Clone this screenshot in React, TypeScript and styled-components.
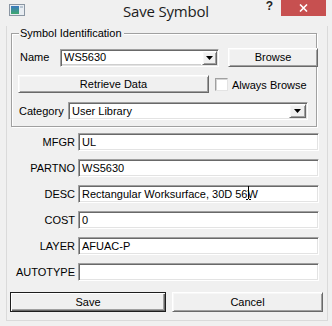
import React from "react";
import styled, { createGlobalStyle, css } from "styled-components";

const GlobalStyle = createGlobalStyle`
  html, body { margin: 0; padding: 0; background: #f0f0f0; }
  body {
    font-family: "Liberation Sans", Arial, sans-serif;
    font-size: 11px;
    color: #000;
  }
  * { box-sizing: border-box; }
`;

const sunken = css`
  border: 1px solid;
  border-color: #a0a0a0 #ffffff #ffffff #a0a0a0;
  box-shadow: inset 1px 1px 0 #696969, inset -1px -1px 0 #e3e3e3;
`;

const raised = css`
  border: 1px solid;
  border-color: #ffffff #696969 #696969 #ffffff;
  box-shadow: inset 1px 1px 0 #f7f7f7, inset -1px -1px 0 #a0a0a0;
  background: #f0f0f0;
`;

const Window = styled.div`
  width: 332px;
  height: 326px;
  background: #f0f0f0;
  display: flex;
  flex-direction: column;
  overflow: hidden;
`;

const TitleBar = styled.div`
  height: 27px;
  display: grid;
  grid-template-columns: 1fr auto 1fr;
  align-items: start;
`;

const AppIcon = styled.svg`
  display: block;
  margin: 4px 0 0 9px;
`;

const Title = styled.div`
  font-family: "Open Sans", "Noto Sans", sans-serif;
  font-size: 15px;
  line-height: 20px;
  padding-top: 1px;
  color: #1c1c1c;
  letter-spacing: -0.2px;
`;

const Controls = styled.div`
  justify-self: end;
  display: flex;
  align-items: flex-start;
  margin-right: 6px;
`;

const HelpGlyph = styled.span`
  font-family: "Liberation Sans", Arial, sans-serif;
  font-weight: bold;
  font-size: 12px;
  line-height: 12px;
  margin-right: 8px;
  color: #222;
`;

const CloseButton = styled.div`
  width: 45px;
  height: 16px;
  background: #c75050;
  display: flex;
  align-items: center;
  justify-content: center;
`;

const Client = styled.div`
  flex: 1;
  margin: 0 4px 5px 6px;
  border: 1px solid #dadada;
  border-top: none;
  padding: 7px 4px 8px 3px;
  display: flex;
  flex-direction: column;
`;

const GroupBox = styled.div`
  position: relative;
  margin: 0 6px 0 1px;
  border: 1px solid #a0a0a0;
  box-shadow: inset 1px 1px 0 #ffffff, 1px 1px 0 #ffffff;
  padding: 14px 7px 6px 6px;
  display: flex;
  flex-direction: column;
`;

const Legend = styled.span`
  position: absolute;
  top: -7px;
  left: 7px;
  padding: 0 2px 0 1px;
  line-height: 13px;
  background: #f0f0f0;
`;

const Row = styled.div<{ $mt?: number; $cols: string; $gap?: number }>`
  display: grid;
  grid-template-columns: ${(p) => p.$cols};
  column-gap: ${(p) => p.$gap ?? 0}px;
  align-items: center;
  margin-top: ${(p) => p.$mt ?? 0}px;
`;

const Label = styled.span<{ $pl?: number }>`
  padding-left: ${(p) => p.$pl ?? 0}px;
  white-space: nowrap;
  line-height: 13px;
`;

const Button = styled.div<{ $h?: number; $default?: boolean }>`
  ${raised};
  height: ${(p) => p.$h ?? 18}px;
  display: flex;
  align-items: center;
  justify-content: center;
  line-height: 13px;
  ${(p) =>
    p.$default &&
    css`
      border: 1px solid #1e1e1e;
      box-shadow: inset 1px 1px 0 #ffffff, inset -1px -1px 0 #696969,
        inset -2px -2px 0 #a0a0a0;
    `}
`;

const Combo = styled.div<{ $h: number; $self?: string }>`
  ${sunken};
  background: #fff;
  height: ${(p) => p.$h}px;
  align-self: ${(p) => p.$self ?? "center"};
  display: flex;
  padding: 1px;
`;

const ComboText = styled.div<{ $underline?: boolean }>`
  flex: 1;
  display: flex;
  align-items: center;
  padding-left: 2px;
  line-height: 13px;
  ${(p) =>
    p.$underline &&
    css`
      border-bottom: 1px solid #cfcfcf;
      margin-right: 1px;
    `}
`;

const DropButton = styled.div<{ $w: number }>`
  ${raised};
  width: ${(p) => p.$w}px;
  display: flex;
  align-items: center;
  justify-content: center;
`;

const CheckWrap = styled.div`
  display: flex;
  align-items: center;
  gap: 4px;
  padding-top: 1px;
`;

const CheckBox = styled.div`
  width: 13px;
  height: 13px;
  border: 1px solid;
  border-color: #a0a0a0 #e3e3e3 #e3e3e3 #a0a0a0;
  box-shadow: inset 1px 1px 0 #d4d4d4;
  background: #fff;
`;

const Fields = styled.div`
  display: grid;
  grid-template-columns: 65px 1fr;
  column-gap: 3px;
  row-gap: 8px;
  margin: 6px 4px 0 0;
`;

const FieldLabel = styled.span`
  text-align: right;
  align-self: center;
  line-height: 13px;
  white-space: nowrap;
`;

const EditBox = styled.div`
  ${sunken};
  background: #fff;
  height: 18px;
  padding: 0 3px;
  line-height: 16px;
  white-space: nowrap;
  overflow: hidden;
`;

const CursorSpot = styled.span`
  position: relative;
  display: inline-block;
  width: 0;
  height: 1px;
`;

const IBeam = styled.svg`
  position: absolute;
  left: -3px;
  top: -12px;
`;

const ButtonRow = styled.div`
  display: grid;
  grid-template-columns: 156px 1fr;
  column-gap: 6px;
  margin-top: 11px;
`;

const Arrow = () => (
  <svg width="7" height="4" viewBox="0 0 7 4">
    <path d="M0 0h7L3.5 4z" fill="#000" />
  </svg>
);

const fields: { label: string; value: string; cursorAt?: number }[] = [
  { label: "MFGR", value: "UL" },
  { label: "PARTNO", value: "WS5630" },
  { label: "DESC", value: "Rectangular Worksurface, 30D 56W", cursorAt: 31 },
  { label: "COST", value: "0" },
  { label: "LAYER", value: "AFUAC-P" },
  { label: "AUTOTYPE", value: "" },
];

export default function App() {
  return (
    <>
      <GlobalStyle />
      <Window>
        <TitleBar>
          <AppIcon width="16" height="12" viewBox="0 0 16 12">
            <defs>
              <linearGradient id="ig" x1="0" y1="0" x2="0" y2="1">
                <stop offset="0" stopColor="#3b78c0" />
                <stop offset="1" stopColor="#3da86e" />
              </linearGradient>
            </defs>
            <rect x="0.5" y="0.5" width="15" height="11" fill="#e8edf2" stroke="#8a96a3" />
            <rect x="2" y="2" width="8" height="8" fill="url(#ig)" />
            <rect x="11" y="2" width="3" height="2" fill="#b9c6d3" />
          </AppIcon>
          <Title>Save Symbol</Title>
          <Controls>
            <HelpGlyph>?</HelpGlyph>
            <CloseButton>
              <svg width="9" height="8" viewBox="0 0 9 8">
                <path d="M1 0.5L8 7.5M8 0.5L1 7.5" stroke="#fff" strokeWidth="1.6" />
              </svg>
            </CloseButton>
          </Controls>
        </TitleBar>
        <Client>
          <GroupBox>
            <Legend>Symbol Identification</Legend>
            <Row $cols="33px 159px 90px" $gap={9}>
              <Label $pl={2}>Name</Label>
              <Combo $h={18} $self="end">
                <ComboText $underline>WS5630</ComboText>
                <DropButton $w={15}>
                  <Arrow />
                </DropButton>
              </Combo>
              <Button $h={19}>Browse</Button>
            </Row>
            <Row $mt={8} $cols="191px auto" $gap={6}>
              <Button>Retrieve Data</Button>
              <CheckWrap>
                <CheckBox />
                <span>Always Browse</span>
              </CheckWrap>
            </Row>
            <Row $mt={9} $cols="50px 240px">
              <Label $pl={1}>Category</Label>
              <Combo $h={18}>
                <ComboText>User Library</ComboText>
                <DropButton $w={17}>
                  <Arrow />
                </DropButton>
              </Combo>
            </Row>
          </GroupBox>
          <Fields>
            {fields.map((f) => (
              <React.Fragment key={f.label}>
                <FieldLabel>{f.label}</FieldLabel>
                <EditBox>
                  {f.cursorAt !== undefined ? (
                    <>
                      {f.value.slice(0, f.cursorAt)}
                      <CursorSpot>
                        <IBeam width="7" height="15" viewBox="0 0 7 15">
                          <path
                            d="M1 0.5h2M4 0.5h2M3.5 1v13M1 14.5h2M4 14.5h2"
                            stroke="#000"
                            strokeWidth="1"
                            fill="none"
                          />
                        </IBeam>
                      </CursorSpot>
                      {f.value.slice(f.cursorAt)}
                    </>
                  ) : (
                    f.value
                  )}
                </EditBox>
              </React.Fragment>
            ))}
          </Fields>
          <ButtonRow>
            <Button $h={20} $default>
              Save
            </Button>
            <Button $h={20}>Cancel</Button>
          </ButtonRow>
        </Client>
      </Window>
    </>
  );
}
